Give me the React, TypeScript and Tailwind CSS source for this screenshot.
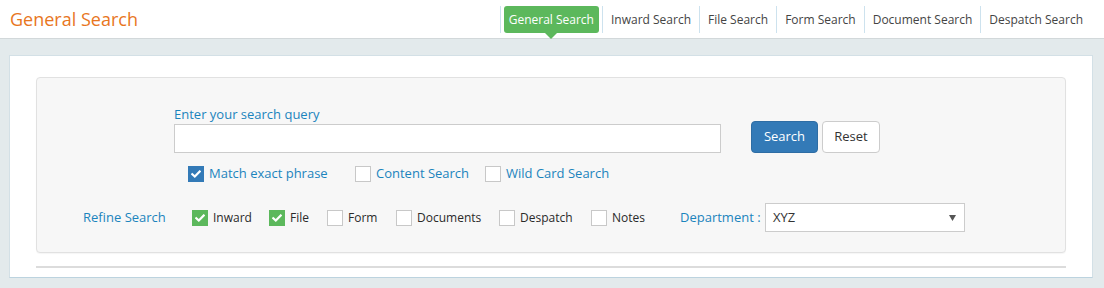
import React from "react";

const tabs = [
  "General Search",
  "Inward Search",
  "File Search",
  "Form Search",
  "Document Search",
  "Despatch Search",
];

function Check({ checked, color }: { checked?: boolean; color?: "blue" | "green" }) {
  if (!checked) {
    return <span className="block h-[16px] w-[16px] shrink-0 border border-[#c8c8c8] bg-white" />;
  }
  return (
    <span
      className={
        color === "green"
          ? "flex h-[16px] w-[16px] shrink-0 items-center justify-center bg-[#5cb85c]"
          : "flex h-[16px] w-[16px] shrink-0 items-center justify-center bg-[#337ab7]"
      }
    >
      <svg width="10" height="8" viewBox="0 0 10 8" fill="none">
        <path d="M1.3 4.2 3.8 6.5 8.7 1.5" stroke="white" strokeWidth="2.2" strokeLinecap="square" />
      </svg>
    </span>
  );
}

function Option({
  label,
  width,
  checked,
  color,
  dark,
}: {
  label: string;
  width: string;
  checked?: boolean;
  color?: "blue" | "green";
  dark?: boolean;
}) {
  return (
    <label className={`flex items-center ${width}`}>
      <Check checked={checked} color={color} />
      <span className={dark ? "ml-[5px] text-[12px] text-[#2a2a2a]" : "ml-[5px] text-[#1b84bd]"}>{label}</span>
    </label>
  );
}

export default function App() {
  return (
    <div className="h-[288px] w-[1104px] overflow-hidden bg-[#e3eaec] font-['Open_Sans',sans-serif] text-[13px]">
      <header className="flex h-[39px] items-start justify-between border-b border-[#d2d8da] bg-white pl-[10px] pr-[13px]">
        <h1 className="mt-[7px] text-[18px] leading-[24px] text-[#e8761e]">General Search</h1>
        <nav className="mt-[6px] flex text-[12px]">
          {tabs.map((t, i) => (
            <div key={t} className="relative h-[27px] border-l border-[#cde2ee] px-[3px]">
              <span
                className={
                  i === 0
                    ? "flex h-full items-center rounded-[3px] bg-[#5cb85c] px-[5px] text-white"
                    : "flex h-full items-center px-[5px] text-[#444]"
                }
              >
                {t}
              </span>
              {i === 0 && (
                <span className="absolute left-1/2 top-[27px] h-0 w-0 -translate-x-1/2 border-x-[6px] border-t-[6px] border-x-transparent border-t-[#5cb85c]" />
              )}
            </div>
          ))}
        </nav>
      </header>

      <main className="ml-[9px] mt-[16px] h-[223px] w-[1084px] border border-[#d3e0e6] border-b-[#bcd3df] bg-white px-[26px] pt-[21px]">
        <section className="h-[176px] rounded-[4px] border border-[#e1e1e1] bg-[#f7f7f7] shadow-[0_1px_1px_rgba(0,0,0,0.04)]">
          <div className="pl-[137px] pt-[27px]">
            <div className="flex items-end">
              <div className="w-[547px]">
                <div className="mb-[1px] leading-[18px] text-[#1b84bd]">Enter your search query</div>
                <input className="block h-[29px] w-full border border-[#cccccc] bg-white px-2 outline-none" />
              </div>
              <button className="ml-[30px] h-[32px] w-[67px] rounded-[4px] border border-[#2e6da4] bg-[#337ab7] text-[13px] text-white">
                Search
              </button>
              <button className="ml-[4px] h-[32px] w-[58px] rounded-[4px] border border-[#cccccc] bg-white text-[13px] text-[#333]">
                Reset
              </button>
            </div>
            <div className="mt-[12px] flex h-[17px] items-center pl-[14px]">
              <Option label="Match exact phrase" width="w-[167px]" checked color="blue" />
              <Option label="Content Search" width="w-[130px]" />
              <Option label="Wild Card Search" width="w-[140px]" />
            </div>
          </div>

          <div className="mt-[21px] flex items-center pl-[46px]">
            <span className="w-[109px] text-[#1b84bd]">Refine Search</span>
            <Option label="Inward" width="w-[77px]" checked color="green" dark />
            <Option label="File" width="w-[58px]" checked color="green" dark />
            <Option label="Form" width="w-[69px]" dark />
            <Option label="Documents" width="w-[103px]" dark />
            <Option label="Despatch" width="w-[92px]" dark />
            <Option label="Notes" width="w-[89px]" dark />
            <span className="w-[85px] text-[#1b84bd]">Department :</span>
            <div className="flex h-[29px] w-[200px] items-center justify-between border border-[#cccccc] bg-white pl-[7px] pr-[8px] text-[#333]">
              <span>XYZ</span>
              <svg width="7" height="6" viewBox="0 0 7 6">
                <path d="M0 0h7L3.5 6z" fill="#555" />
              </svg>
            </div>
          </div>
        </section>
        <div className="mt-[13px] h-[2px] bg-[#dcdcdc]" />
      </main>
    </div>
  );
}
